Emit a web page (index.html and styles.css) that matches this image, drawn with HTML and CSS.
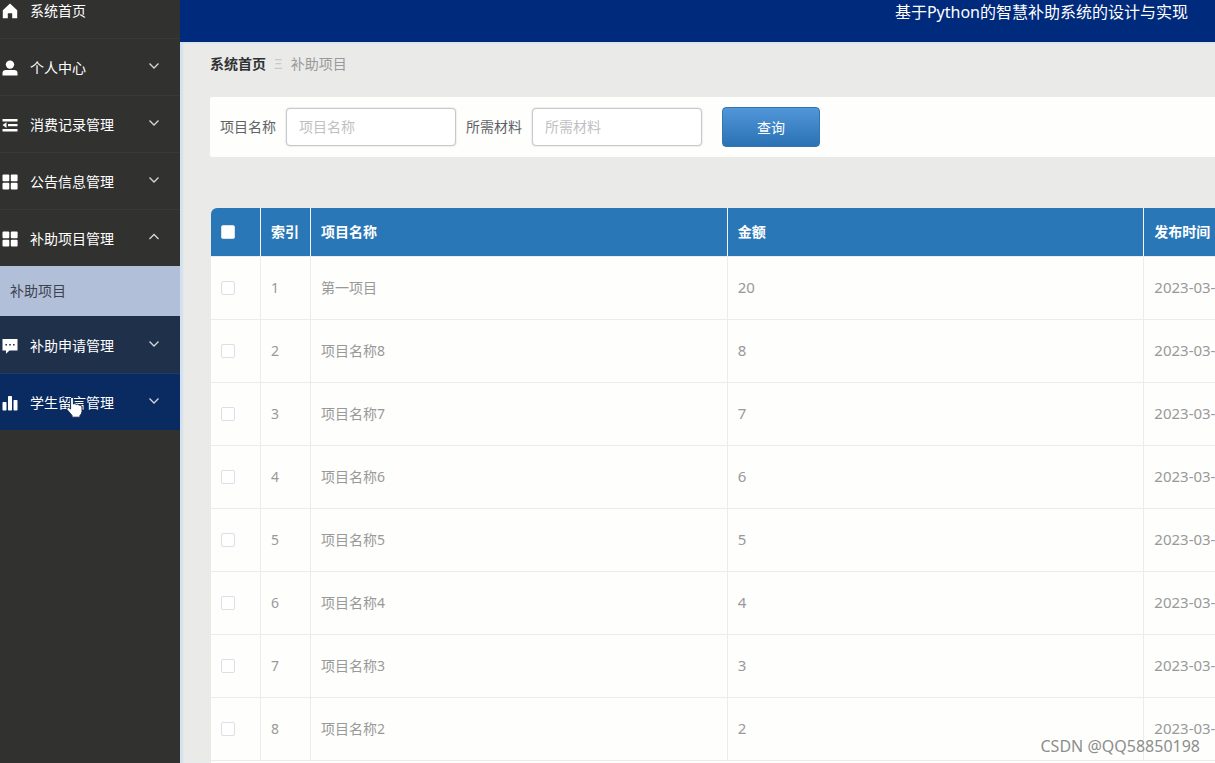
FILE: index.html
```html
<!DOCTYPE html>
<html lang="zh-CN">
<head>
    <meta charset="UTF-8">
    <meta name="viewport" content="width=device-width, initial-scale=1.0">
    <title>基于Python的智慧补助系统的设计与实现</title>
    <link rel="stylesheet" href="styles.css">
</head>
<body>
    <div class="layout">
        <!-- 左侧菜单 -->
        <nav class="sidebar">
            <a href="#" class="menu-item first">
                <svg class="icon" viewBox="0 0 16 16"><path d="M8 0.5L0.8 7.2V15.2H5.8V10.2H10.2V15.2H15.2V7.2Z"/></svg>
                <span>系统首页</span>
            </a>
            <a href="#" class="menu-item">
                <svg class="icon" viewBox="0 0 16 16"><circle cx="8" cy="4.6" r="4.2"/><path d="M0.5 15.5V13Q0.5 10 4 10H12Q15.5 10 15.5 13V15.5Z"/></svg>
                <span>个人中心</span>
                <svg class="arrow" viewBox="0 0 12 12"><path d="M1.5 3.5L6 8L10.5 3.5"/></svg>
            </a>
            <a href="#" class="menu-item">
                <svg class="icon" viewBox="0 0 16 16"><path d="M0.5 2H15.5V4.4H0.5ZM6 7H15.5V9.2H6ZM0.5 12H15.5V14.4H0.5ZM4.5 5.2V11L0.5 8.1Z"/></svg>
                <span>消费记录管理</span>
                <svg class="arrow" viewBox="0 0 12 12"><path d="M1.5 3.5L6 8L10.5 3.5"/></svg>
            </a>
            <a href="#" class="menu-item">
                <svg class="icon" viewBox="0 0 16 16"><rect x="0.5" y="0.5" width="6.8" height="6.8" rx="1"/><rect x="8.8" y="0.5" width="6.8" height="6.8" rx="1"/><rect x="0.5" y="8.8" width="6.8" height="6.8" rx="1"/><rect x="8.8" y="8.8" width="6.8" height="6.8" rx="1"/></svg>
                <span>公告信息管理</span>
                <svg class="arrow" viewBox="0 0 12 12"><path d="M1.5 3.5L6 8L10.5 3.5"/></svg>
            </a>
            <a href="#" class="menu-item">
                <svg class="icon" viewBox="0 0 16 16"><rect x="0.5" y="0.5" width="6.8" height="6.8" rx="1"/><rect x="8.8" y="0.5" width="6.8" height="6.8" rx="1"/><rect x="0.5" y="8.8" width="6.8" height="6.8" rx="1"/><rect x="8.8" y="8.8" width="6.8" height="6.8" rx="1"/></svg>
                <span>补助项目管理</span>
                <svg class="arrow" viewBox="0 0 12 12"><path d="M1.5 8L6 3.5L10.5 8"/></svg>
            </a>
            <a href="#" class="submenu-item">补助项目</a>
            <a href="#" class="menu-item fading">
                <svg class="icon" viewBox="0 0 16 16"><path fill-rule="evenodd" d="M0.5 1H15.5V12.5H7.5L4 15.8V12.5H0.5ZM3.4 6V7.6H5V6ZM7.2 6V7.6H8.8V6ZM11 6V7.6H12.6V6Z"/></svg>
                <span>补助申请管理</span>
                <svg class="arrow" viewBox="0 0 12 12"><path d="M1.5 3.5L6 8L10.5 3.5"/></svg>
            </a>
            <a href="#" class="menu-item hover">
                <svg class="icon" viewBox="0 0 16 16"><rect x="0.5" y="7" width="4" height="8.5" rx="0.8"/><rect x="6" y="1" width="4" height="14.5" rx="0.8"/><rect x="11.5" y="5" width="4" height="10.5" rx="0.8"/></svg>
                <span>学生留言管理</span>
                <svg class="arrow" viewBox="0 0 12 12"><path d="M1.5 3.5L6 8L10.5 3.5"/></svg>
                <svg class="pointer" viewBox="0 0 18 22"><path d="M4.6 2Q6 0.2 7.4 2V8Q9 7 10.2 8.4Q11.8 7.6 13 9Q15.6 8.6 16 11V15.5Q15.6 18.4 14 19.4V21.2H6V19.4L1 13.6Q0.4 11.2 2.6 11.4L4.6 13Z"/></svg>
            </a>
        </nav>

        <div class="page">
            <header class="header">基于Python的智慧补助系统的设计与实现</header>

            <main class="content">
                <div class="breadcrumb">
                    <a href="#">系统首页</a>
                    <span class="separator">Ξ</span>
                    <span>补助项目</span>
                </div>

                <!-- 查询 -->
                <form class="search">
                    <label for="name">项目名称</label>
                    <input type="text" id="name" placeholder="项目名称">
                    <label for="material">所需材料</label>
                    <input type="text" id="material" placeholder="所需材料">
                    <button type="button">查询</button>
                </form>

                <!-- 数据列表 -->
                <div class="table-box">
                    <table>
                        <colgroup>
                            <col class="col-small">
                            <col class="col-small">
                            <col class="col-wide">
                            <col class="col-wide">
                            <col class="col-wide">
                        </colgroup>
                        <thead>
                            <tr>
                                <th class="check"><input type="checkbox" aria-label="全选"></th>
                                <th>索引</th>
                                <th>项目名称</th>
                                <th>金额</th>
                                <th>发布时间</th>
                            </tr>
                        </thead>
                        <tbody>
                            <tr><td class="check"><input type="checkbox" aria-label="1"></td><td>1</td><td>第一项目</td><td class="num">20</td><td class="num">2023-03-</td></tr>
                            <tr><td class="check"><input type="checkbox" aria-label="2"></td><td>2</td><td>项目名称8</td><td class="num">8</td><td class="num">2023-03-</td></tr>
                            <tr><td class="check"><input type="checkbox" aria-label="3"></td><td>3</td><td>项目名称7</td><td class="num">7</td><td class="num">2023-03-</td></tr>
                            <tr><td class="check"><input type="checkbox" aria-label="4"></td><td>4</td><td>项目名称6</td><td class="num">6</td><td class="num">2023-03-</td></tr>
                            <tr><td class="check"><input type="checkbox" aria-label="5"></td><td>5</td><td>项目名称5</td><td class="num">5</td><td class="num">2023-03-</td></tr>
                            <tr><td class="check"><input type="checkbox" aria-label="6"></td><td>6</td><td>项目名称4</td><td class="num">4</td><td class="num">2023-03-</td></tr>
                            <tr><td class="check"><input type="checkbox" aria-label="7"></td><td>7</td><td>项目名称3</td><td class="num">3</td><td class="num">2023-03-</td></tr>
                            <tr><td class="check"><input type="checkbox" aria-label="8"></td><td>8</td><td>项目名称2</td><td class="num">2</td><td class="num">2023-03-</td></tr>
                        </tbody>
                    </table>
                </div>
            </main>
        </div>
    </div>
    <div class="watermark">CSDN @QQ58850198</div>
</body>
</html>
```
FILE: styles.css
```css
* {
    box-sizing: border-box;
}
body {
    margin: 0;
    font-family: "Noto Sans", "Noto Sans CJK SC", sans-serif;
    font-size: 14px;
    color: #606266;
}
a {
    color: inherit;
    text-decoration: none;
}
.layout {
    display: flex;
    height: 100vh;
    overflow: hidden;
}

/* 左侧菜单 */
.sidebar {
    flex: none;
    width: 180px;
    background: #31312f;
    color: #fff;
}
.menu-item {
    position: relative;
    display: flex;
    align-items: center;
    gap: 12px;
    height: 57px;
    padding: 2px 20px 0 2px;
    border-top: 1px solid #393937;
}
.menu-item span {
    padding-bottom: 2px;
}
.menu-item.first {
    height: 38px;
    padding-bottom: 18px;
    border-top: none;
}
.menu-item.fading {
    background: #1f304b;
    border-color: #1f304b;
}
.menu-item.hover {
    background: #0a2b62;
    border-color: #1c3a6a;
}
.icon {
    width: 16px;
    height: 16px;
    fill: #fff;
}
.arrow {
    width: 12px;
    height: 12px;
    margin-left: auto;
    margin-bottom: 4px;
    fill: none;
    stroke: #d8d8d8;
    stroke-width: 1.3;
}
.submenu-item {
    display: block;
    height: 50px;
    padding-left: 10px;
    line-height: 50px;
    background: #b2bfd8;
    color: #3c4250;
}
.pointer {
    position: absolute;
    left: 66px;
    top: 22px;
    width: 18px;
    height: 22px;
    fill: #fff;
    stroke: #1b2c4c;
    stroke-width: 1;
}

/* 右侧内容 */
.page {
    flex: 1;
    min-width: 0;
    display: flex;
    flex-direction: column;
    background: #eaeae9;
}
.header {
    flex: none;
    height: 42px;
    padding-right: 27px;
    background: #002a7c;
    color: #fff;
    font-size: 16px;
    line-height: 24px;
    text-align: right;
}
.content {
    flex: 1;
    min-height: 0;
    display: flex;
    flex-direction: column;
    padding: 12px 0 0 30px;
    box-shadow: inset 3px 1px 2px #d3e0ee;
}
.breadcrumb {
    display: flex;
    gap: 8px;
    height: 43px;
    line-height: 20px;
    color: #999;
}
.breadcrumb a {
    color: #303133;
    font-weight: bold;
}
.separator {
    color: #c8c8c8;
}
.search {
    display: flex;
    align-items: center;
    gap: 10px;
    height: 60px;
    margin-bottom: 51px;
    padding: 0 10px;
    background: #fefefd;
    border-radius: 2px 0 0 2px;
}
.search label {
    padding-bottom: 2px;
}
.search input {
    width: 170px;
    height: 38px;
    padding: 0 12px 2px;
    border: 1px solid #c8c8cc;
    border-radius: 4px;
    box-shadow: 0 0 2px #ccc;
    font: inherit;
}
.search input::placeholder {
    color: #bfc0c3;
}
.search button {
    width: 98px;
    height: 40px;
    margin-left: 10px;
    padding-bottom: 2px;
    border: 1px solid #3275b0;
    border-radius: 4px;
    background: linear-gradient(#5096d8, #2b72b5);
    color: #fff;
    font: inherit;
}

/* 表格 */
.table-box {
    flex: 1;
    min-height: 0;
    overflow: hidden;
    margin-left: 1px;
    border-radius: 6px 0 0 0;
    background: #fefefd;
}
table {
    width: 1350px;
    table-layout: fixed;
    border-collapse: separate;
    border-spacing: 0;
}
.col-small {
    width: 50px;
}
th,
td {
    padding: 0 10px 2px;
    border-right: 1px solid #ececec;
    text-align: left;
}
th {
    height: 49px;
    border-right-color: #f0f4f8;
    border-bottom: 1px solid #ececec;
    background: #2a77b8;
    background-clip: padding-box;
    color: #fff;
}
td {
    height: 63px;
    border-bottom: 1px solid #ececec;
    color: #999;
}
.check {
    padding-bottom: 0;
}
.num {
    font-size: 15px;
}
input[type="checkbox"] {
    appearance: none;
    display: block;
    width: 14px;
    height: 14px;
    margin: 0;
    border: 1px solid #dcdfe6;
    border-radius: 2px;
    background: #fff;
}

.watermark {
    position: absolute;
    right: 15px;
    bottom: 6px;
    color: #8d8d8d;
    font-size: 16px;
    text-shadow: 0 0 1px #fff;
}
```
